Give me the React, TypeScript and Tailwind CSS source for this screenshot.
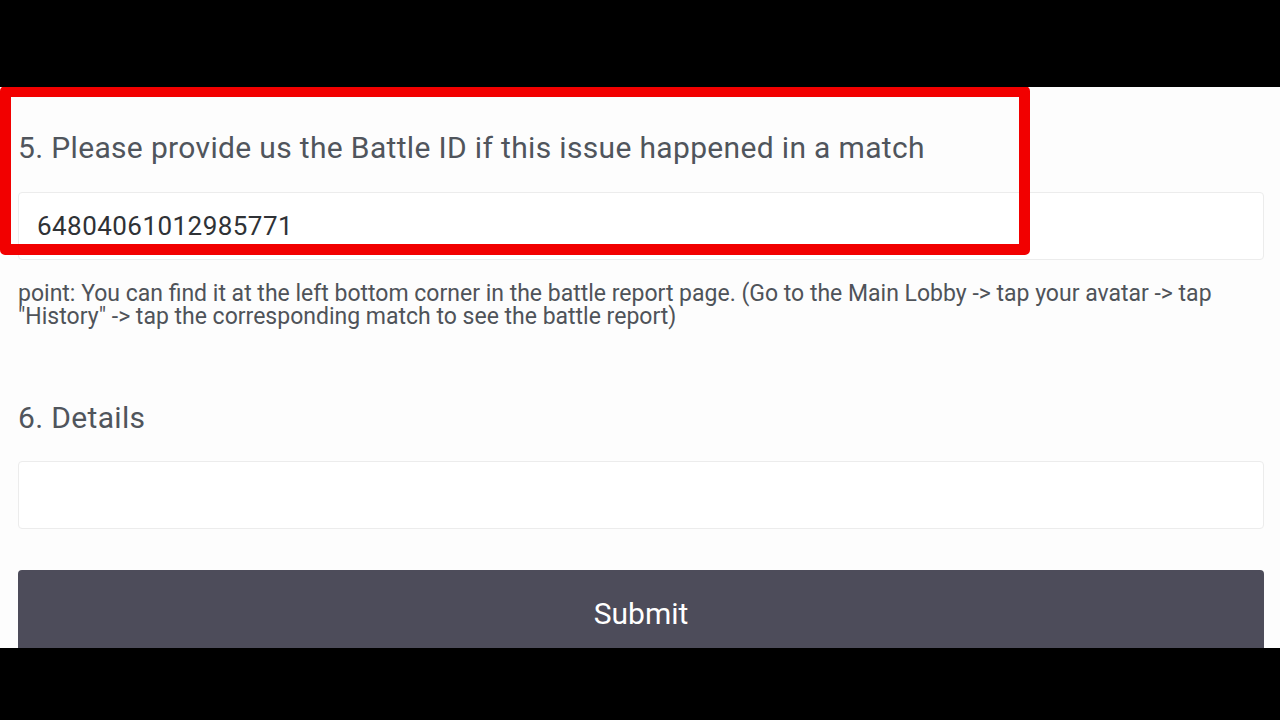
import React from 'react';

const font = { fontFamily: 'Roboto, "Noto Sans", Arial, sans-serif' };

function Field({ value }: { value?: string }) {
  return (
    <div className="h-[68px] w-full rounded-[4px] border border-[#ececec] bg-white flex items-center pl-[18px]">
      {value && <span className="text-[26px] text-[#2f3236] tracking-[0.45px]">{value}</span>}
    </div>
  );
}

export default function App() {
  return (
    <div className="w-[1280px] h-[720px] bg-black flex flex-col overflow-hidden" style={font}>
      <div className="h-[87px] shrink-0 bg-black" />

      {/* ── Form ── */}
      <div className="relative h-[561px] shrink-0 bg-[#fdfdfd] overflow-hidden">
        <div className="pl-[18px] pr-[16px] pt-[43px] flex flex-col">
          <h2 className="text-[30px] leading-[36px] text-[#50555c] tracking-[0.34px]">
            5. Please provide us the Battle ID if this issue happened in a match
          </h2>
          <div className="mt-[26px]">
            <Field value="64804061012985771" />
          </div>
          <p className="mt-[22px] text-[23px] leading-[23px] text-[#4f5359] tracking-[0px]">
            point: You can find it at the left bottom corner in the battle report page. (Go to the Main Lobby -&gt; tap your avatar -&gt; tap "History" -&gt; tap the corresponding match to see the battle report)
          </p>

          <h2 className="mt-[72px] text-[30px] leading-[36px] text-[#50555c] tracking-[0.34px]">6. Details</h2>
          <div className="mt-[25px]">
            <Field />
          </div>

          <button className="mt-[41px] h-[86px] w-full rounded-[4px] bg-[#4d4c5a] text-white text-[30px]">
            Submit
          </button>
        </div>

        {/* highlight frame */}
        <div className="absolute left-0 top-[-1px] w-[1030px] h-[169px] border-[11px] border-[#f20000] rounded-[5px]" />
      </div>

      <div className="flex-1 bg-black" />
    </div>
  );
}
